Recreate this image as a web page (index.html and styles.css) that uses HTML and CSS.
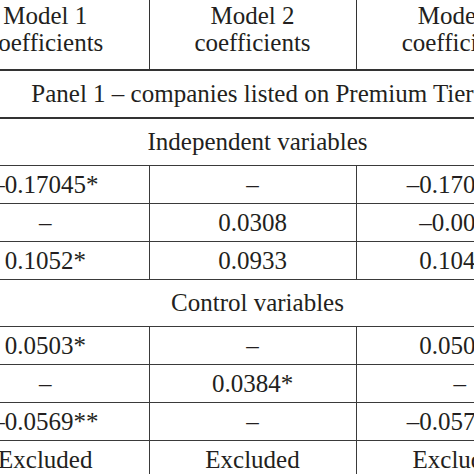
FILE: index.html
```html
<!DOCTYPE html>
<html>
<head>
<meta charset="utf-8">
<link rel="stylesheet" href="styles.css">
</head>
<body>
<table class="results">
  <colgroup><col class="c"><col class="c"><col class="c"></colgroup>
  <thead>
    <tr class="head">
      <th>Model 1<br>coefficients</th>
      <th>Model 2<br>coefficients</th>
      <th>Model 3<br>coefficients</th>
    </tr>
  </thead>
  <tbody>
    <tr class="panel"><td colspan="3">Panel 1 – companies listed on Premium Tier</td></tr>
    <tr class="section"><td colspan="3">Independent variables</td></tr>
    <tr class="data"><td>–0.17045*</td><td>–</td><td>–0.17045*</td></tr>
    <tr class="data"><td>–</td><td>0.0308</td><td>–0.0042</td></tr>
    <tr class="data last"><td>0.1052*</td><td>0.0933</td><td>0.1049*</td></tr>
    <tr class="section"><td colspan="3">Control variables</td></tr>
    <tr class="data"><td>0.0503*</td><td>–</td><td>0.0504*</td></tr>
    <tr class="data"><td>–</td><td>0.0384*</td><td>–</td></tr>
    <tr class="data"><td>–0.0569**</td><td>–</td><td>–0.0571**</td></tr>
    <tr class="data"><td>Excluded</td><td>Excluded</td><td>Excluded</td></tr>
  </tbody>
</table>
</body>
</html>
```
FILE: styles.css
```css
html, body {
  margin: 0;
  padding: 0;
  background: #ffffff;
  overflow: hidden;
}
.results {
  margin-left: -58px;
  width: 621px;
  border-collapse: collapse;
  table-layout: fixed;
  font-family: "Liberation Serif", "Times New Roman", serif;
  font-size: 25px;
  color: #231f20;
}
.results col.c {
  width: 207px;
}
.results th,
.results td {
  padding: 0;
  text-align: center;
  vertical-align: middle;
  font-weight: normal;
  white-space: nowrap;
}
.head th {
  height: 70px;
  line-height: 27px;
  padding: 0 0 13px;
  box-sizing: border-box;
  vertical-align: bottom;
  border-bottom: 2px solid #333;
}
.head th + th {
  border-left: 1.5px solid #333;
}
.panel td {
  height: 46px;
  border-bottom: 2px solid #333;
}
.section td {
  height: 46px;
  padding-left: 10px;
  border-bottom: 1.5px solid #3a3a3a;
}
.data td {
  height: 37px;
  border-bottom: 1.5px solid #3a3a3a;
}
.data td + td {
  border-left: 1.5px solid #3a3a3a;
}
```
